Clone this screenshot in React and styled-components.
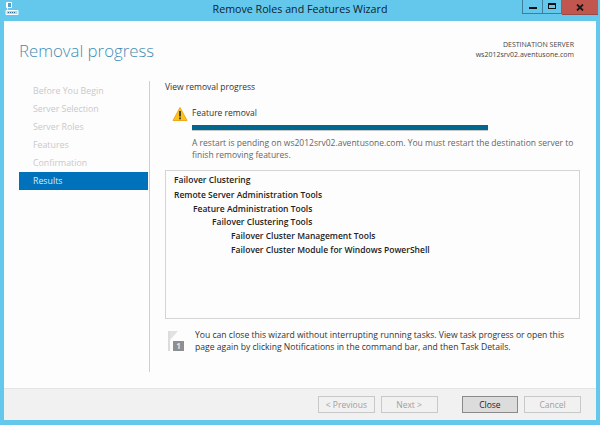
import React from "react"
import styled, { createGlobalStyle } from "styled-components"

const steps = ["Before You Begin", "Server Selection", "Server Roles", "Features", "Confirmation", "Results"]

const features = [
  { text: "Failover Clustering", level: 0, gap: 0 },
  { text: "Remote Server Administration Tools", level: 0, gap: 1 },
  { text: "Feature Administration Tools", level: 1, gap: 0 },
  { text: "Failover Clustering Tools", level: 2, gap: -1 },
  { text: "Failover Cluster Management Tools", level: 3, gap: 0 },
  { text: "Failover Cluster Module for Windows PowerShell", level: 3, gap: 0 },
]

const App = () => {
  return (
    <Window>
      <GlobalStyle />
      <TitleBar>
        <AppIcon viewBox="0 0 14 14">
          <path d="M1.500 .500h5v5h-5z" fill="#4f9fd0" stroke="#fff" />
          <path d="M2.500 7.500v-7M1 12.500h12v-4H1z" fill="#9fdcf2" stroke="#fff" />
          <path d="M3 10.500h8" stroke="#2a6f98" strokeDasharray="1 1" />
        </AppIcon>
        <Title>Remove Roles and Features Wizard</Title>
        <Controls>
          <Control $width={21}>
            <Minimize />
          </Control>
          <Control $width={19}>
            <Maximize />
          </Control>
          <CloseControl>
            <svg width="8" height="7" viewBox="0 0 8 7">
              <path d="M1 .500l6 6M7 .500l-6 6" stroke="#1a1a1a" strokeWidth="1.800" />
            </svg>
          </CloseControl>
        </Controls>
      </TitleBar>
      <Panel>
        <Header>
          <Heading>Removal progress</Heading>
          <Destination>
            <div>DESTINATION SERVER</div>
            <div>ws2012srv02.aventusone.com</div>
          </Destination>
        </Header>
        <Body>
          <Nav>
            {steps.map(step => (
              <NavItem key={step} $active={step === "Results"}>
                {step}
              </NavItem>
            ))}
          </Nav>
          <Content>
            <Intro>View removal progress</Intro>
            <Status>
              <svg width="16" height="14" viewBox="0 0 16 14">
                <path d="M8 .500L15 13.500H1z" fill="#fcc419" stroke="#f0a818" strokeLinejoin="round" />
                <path d="M8 4v5.500M8 10.500v1.800" stroke="#222" strokeWidth="1.600" />
              </svg>
              <StatusBody>
                <StatusLabel>Feature removal</StatusLabel>
                <Progress>
                  <ProgressFill />
                </Progress>
                <StatusText>
                  A restart is pending on ws2012srv02.aventusone.com. You must restart the destination server to
                  finish removing features.
                </StatusText>
              </StatusBody>
            </Status>
            <ResultBox>
              {features.map(item => (
                <ResultRow key={item.text} $level={item.level} $gap={item.gap}>
                  {item.text}
                </ResultRow>
              ))}
            </ResultBox>
            <Notice>
              <svg width="16" height="21" viewBox="0 0 16 21">
                <path d="M1 0v20" stroke="#dcdcdc" strokeWidth="2" />
                <path d="M2 0h8L2 9z" fill="#e2e2e2" />
                <rect x="5" y="10" width="11" height="10" fill="#8f8f8f" />
                <FlagCount x="10.500" y="18">1</FlagCount>
              </svg>
              <NoticeText>
                You can close this wizard without interrupting running tasks. View task progress or open this page
                again by clicking Notifications in the command bar, and then Task Details.
              </NoticeText>
            </Notice>
          </Content>
        </Body>
        <Footer>
          <Button disabled>&lt; Previous</Button>
          <NextButton disabled>Next &gt;</NextButton>
          <PrimaryButton>Close</PrimaryButton>
          <Button disabled>Cancel</Button>
        </Footer>
      </Panel>
    </Window>
  )
}

const GlobalStyle = createGlobalStyle`
  html, body {
    margin: 0;
    padding: 0;
    background: #63c8ec;
  }
`

const Window = styled.div`
  width: 600px;
  height: 425px;
  display: flex;
  flex-direction: column;
  background: #63c8ec;
  font-family: "Open Sans", "Noto Sans", sans-serif;
  font-size: 8.500px;
  color: #333;
  overflow: hidden;
`

const TitleBar = styled.header`
  height: 21px;
  flex: none;
  display: flex;
  align-items: flex-start;
  justify-content: space-between;
  padding: 0 2px 0 5px;
  box-sizing: border-box;
  position: relative;
`

const AppIcon = styled.svg`
  width: 14px;
  height: 14px;
  margin-top: 2px;
`

const Title = styled.div`
  position: absolute;
  left: 0;
  right: 0;
  top: 2px;
  text-align: center;
  font-size: 10.700px;
  line-height: 15px;
  color: #10222c;
`

const Controls = styled.div`
  display: flex;
  position: relative;
`

const Control = styled.div`
  width: ${p => p.$width}px;
  height: 14px;
  display: flex;
  align-items: center;
  justify-content: center;
  box-sizing: border-box;
  border: solid #3d7f99;
  border-width: 0 1px 1px 0;
  &:first-child {
    border-left-width: 1px;
  }
`

const CloseControl = styled.div`
  width: 36px;
  height: 14px;
  display: flex;
  align-items: center;
  justify-content: center;
  background: #c1564e;
  border-bottom: 1px solid #9a4a44;
`

const Minimize = styled.span`
  width: 8px;
  height: 2px;
  margin-top: 3px;
  background: #111;
`

const Maximize = styled.span`
  width: 6px;
  height: 3px;
  border: 1px solid #111;
  border-top-width: 2px;
  margin-top: -2px;
`

const Panel = styled.main`
  flex: none;
  width: 592px;
  height: 399px;
  margin-left: 4px;
  background: #fdfdfd;
  display: flex;
  flex-direction: column;
`

const Header = styled.div`
  height: 60px;
  flex: none;
  display: flex;
  justify-content: space-between;
  padding: 0 22px 0 15px;
`

const Heading = styled.h1`
  margin: 16px 0 0;
  font-size: 16.800px;
  line-height: 27px;
  font-weight: 300;
  color: #3f8db5;
`

const Destination = styled.div`
  margin-top: 19px;
  text-align: right;
  font-size: 7px;
  line-height: 10px;
  color: #444;
`

const Body = styled.div`
  flex: 1;
  display: flex;
  min-height: 0;
`

const Nav = styled.nav`
  width: 129px;
  margin: 1px 0 0 15px;
  flex: none;
  display: flex;
  flex-direction: column;
`

const NavItem = styled.div`
  height: 18px;
  line-height: 19px;
  padding-left: 14px;
  font-size: 8.800px;
  background: ${p => (p.$active ? "#0072bc" : "transparent")};
  color: ${p => (p.$active ? "#d8ecf7" : "#c9c9c9")};
`

const Content = styled.section`
  margin-left: 1px;
  margin-bottom: 16px;
  flex: 1;
  border-left: 1px solid #cfcfcf;
  padding-left: 15px;
  padding-right: 16px;
  display: flex;
  flex-direction: column;
  min-width: 0;
`

const Intro = styled.div`
  line-height: 12px;
  font-size: 8.500px;
`

const Status = styled.div`
  display: flex;
  gap: 4px;
  margin-top: 14px;
  margin-left: 7px;
`

const StatusBody = styled.div`
  flex: 1;
  min-width: 0;
`

const StatusLabel = styled.div`
  font-size: 8.500px;
  line-height: 12px;
`

const Progress = styled.div`
  width: 296px;
  height: 6px;
  margin-top: 6px;
  background: #c8c8c8;
`

const ProgressFill = styled.div`
  height: 5px;
  background: #00688f;
`

const StatusText = styled.p`
  margin: 6px 0 0;
  font-size: 8.500px;
  line-height: 12px;
  color: #666;
`

const ResultBox = styled.div`
  height: 149px;
  margin-top: 9px;
  flex: none;
  border: 1px solid #d4d4d4;
  padding: 2px 0 0 8px;
  box-sizing: border-box;
`

const ResultRow = styled.div`
  padding-left: ${p => p.$level * 19}px;
  margin-top: ${p => p.$gap}px;
  font-size: 8.500px;
  font-weight: 600;
  line-height: 14px;
  color: #222;
`

const FlagCount = styled.text`
  font-size: 8px;
  font-weight: 700;
  text-anchor: middle;
  fill: #e8e8e8;
`

const Notice = styled.div`
  display: flex;
  gap: 11px;
  margin-top: 12px;
  margin-left: 3px;
`

const NoticeText = styled.p`
  margin: -2px 0 0;
  width: 385px;
  font-size: 8.600px;
  line-height: 12px;
  color: #333;
`

const Footer = styled.footer`
  height: 32px;
  flex: none;
  display: flex;
  align-items: flex-start;
  padding: 7px 15px 0 314px;
  box-sizing: border-box;
  background: #f1f1f1;
  border-top: 1px solid #e4e4e4;
`

const Button = styled.button`
  width: 57px;
  height: 17px;
  padding: 0;
  border: 1px solid #c8c8c8;
  background: #f1f1f1;
  font-family: inherit;
  font-size: 8.500px;
  color: #a0a0a0;
`

const NextButton = styled(Button)`
  margin-left: 6px;
`

const PrimaryButton = styled(Button)`
  margin: 0 6px 0 24px;
  background: #dcdcdc;
  border-color: #8a8a8a;
  color: #222;
`

export default App
